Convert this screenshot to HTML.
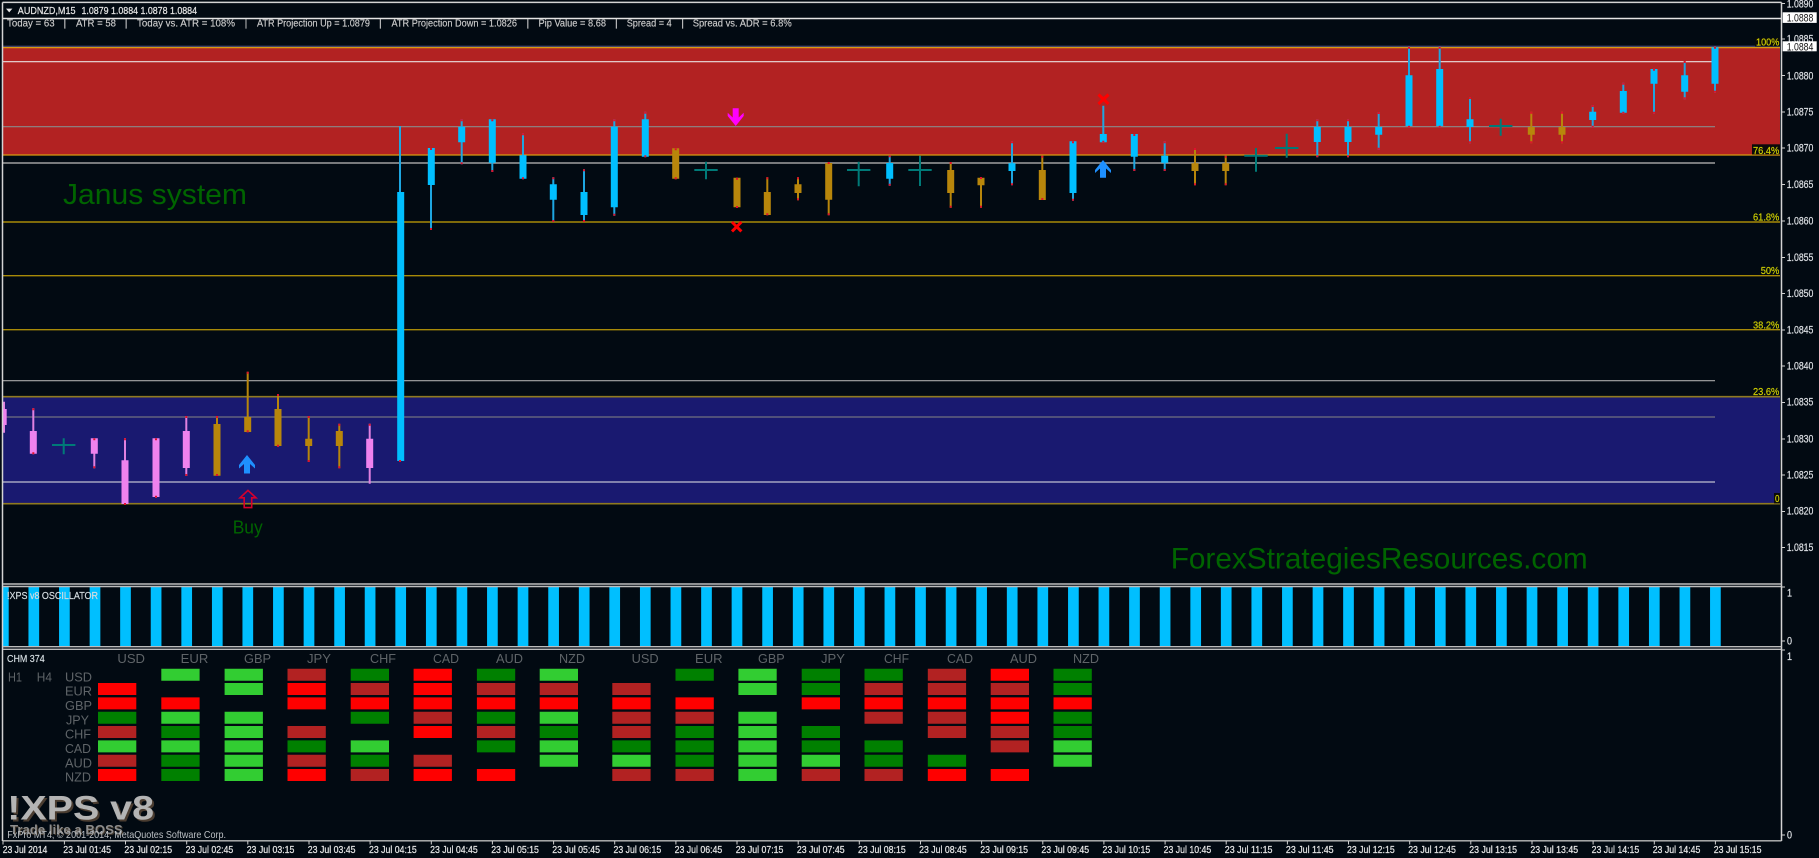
<!DOCTYPE html>
<html lang="en">
<head>
<meta charset="utf-8">
<title>AUDNZD,M15</title>
<style>
html,body{margin:0;padding:0;background:#020a12;width:1819px;height:858px;overflow:hidden}
svg{display:block;position:absolute;left:0;top:0}
text{font-family:"Liberation Sans",sans-serif}
.t{fill:#e4e4e4;stroke:#e4e4e4;stroke-width:.25px;font-size:10.5px}
.i{fill:#cccccc;stroke:#cccccc;stroke-width:.15px;font-size:10.5px}
.p{fill:#dde0e4;stroke:#dde0e4;stroke-width:.2px;font-size:11px}
.f{fill:#d0d000;stroke:#d0d000;stroke-width:.2px;font-size:10.5px}
.c{fill:#5f6468;font-size:13px}
.n{fill:none}
</style>
</head>
<body>
<svg width="1819" height="858" viewBox="0 0 1819 858" xmlns="http://www.w3.org/2000/svg">
<rect width="1819" height="858" fill="#020a12"/>

<!-- zones -->
<rect x="3" y="47.3" width="1777" height="107.7" fill="#b22222"/>
<rect x="3" y="396.7" width="1777" height="107" fill="#191970"/>

<!-- pivot lines -->
<path class="n" stroke="#e8e0e0" stroke-width="1.2" d="M3 61.7H1715"/>
<path class="n" stroke="#8a8a8a" stroke-width="1.2" d="M3 126.7H1715"/>
<path class="n" stroke="#a0a0a0" stroke-width="1.6" d="M3 163H1715"/>
<path class="n" stroke="#a8a8a8" stroke-width="1.2" d="M3 380.7H1715"/>
<path class="n" stroke="#62627e" stroke-width="1.6" d="M3 417H1715"/>
<path class="n" stroke="#a4a4c0" stroke-width="1.6" d="M3 482H1715"/>

<!-- fib lines -->
<path class="n" stroke="#5a5a88" stroke-width="1" d="M3 46.2H1780"/>
<path class="n" stroke="#d99a10" stroke-width="1.3" d="M3 47.6H1780M3 155H1780"/>
<path class="n" stroke="#a88a08" stroke-width="1.4" d="M3 222H1780M3 275.7H1780M3 329.7H1780"/>
<path class="n" stroke="#8f7a20" stroke-width="1.6" d="M3 396.7H1780M3 503.7H1780"/>

<!-- fib label backing -->
<rect x="1755" y="38" width="25" height="8.3" fill="#0a0a0a"/>
<rect x="1752" y="144.3" width="28" height="10.2" fill="#0a0a0a"/>
<rect x="1774" y="493" width="6" height="10.3" fill="#0a0a0a"/>
<text class="f" x="1756" y="45.5" textLength="23.3" lengthAdjust="spacingAndGlyphs">100%</text>
<text class="f" x="1753" y="154" textLength="26.3" lengthAdjust="spacingAndGlyphs">76.4%</text>
<text class="f" x="1753" y="220.5" textLength="26.3" lengthAdjust="spacingAndGlyphs">61.8%</text>
<text class="f" x="1760.7" y="274" textLength="18.6" lengthAdjust="spacingAndGlyphs">50%</text>
<text class="f" x="1753" y="328.5" textLength="26.3" lengthAdjust="spacingAndGlyphs">38.2%</text>
<text class="f" x="1753" y="395" textLength="26.3" lengthAdjust="spacingAndGlyphs">23.6%</text>
<text class="f" x="1775" y="502" textLength="4.5" lengthAdjust="spacingAndGlyphs">0</text>

<!-- blue candles: wicks -->
<path class="n" stroke="#1ea6e0" stroke-width="2" d="M400 126V462M431 148V230M461.7 119.3V164.3M492.3 119.3V172M523 133.3V179.3M553.3 177.3V222M584 169.3V222M614.3 119.3V215.7M645.3 111.7V157.3M889.7 155.3V185.7M1012 141.3V185.3M1073 141.3V200.7M1103.3 105.7V142.7M1134.3 134V171M1164.7 141.3V171M1317.3 119.3V157.3M1348 119.3V157.3M1378.7 112V149.7M1409 46.7V127.7M1439.7 46.7V127.7M1470 97V143.3M1592.7 105V127.7M1623.3 82.7V113.7M1654 68.7V113.7M1684.7 61V99.3M1715 46.7V92.7"/>
<!-- blue candles: bodies -->
<path class="n" stroke="#00bfff" stroke-width="7" d="M400.7 192V461M431.3 148V185M461.7 126.7V142.3M492.3 119.3V162.7M523 155.3V178.7M553.3 184.3V199.7M584 192V215M614.3 126.7V207.3M645.3 119.3V156.7M889.7 163V178.7M1012 163.3V171M1073 141.3V193M1103.3 134V142.3M1134.3 134V156.7M1164.7 155.7V162.7M1317.3 127V142M1348 127V142M1378.7 127V134.7M1409 75.3V126M1439.7 69V126M1470 119.3V127M1592.7 111.7V120M1623.3 91V112.7M1654 69V83.7M1684.7 75.3V91.7M1715 47.3V83.7"/>

<!-- gold candles -->
<path class="n" stroke="#b8860b" stroke-width="2" d="M217 416V476M247.7 371.7V432.3M278 394V446.7M308.7 416V462M339.3 423.7V468.3M675.7 148.3V179.3M737 177.7V208M767.3 177.3V215.3M798 177.3V200.3M828.7 162V215.3M950.7 162V207.7M981 177V207.7M1042.3 155.7V200M1195 148V185.3M1225.7 155.7V185.3M1531.3 111.7V143.3M1562 111.7V143.3"/>
<path class="n" stroke="#b8860b" stroke-width="7" d="M217 424V475.7M247.7 417V432M278 409V446M308.7 438.7V446M339.3 431V446M675.7 148.3V178.7M737 177.7V207.3M767.3 192V215M798 184.3V193M828.7 163V199.7M950.7 170V193M981 177.7V185.3M1042.3 170V200M1195 163.3V171M1225.7 163.3V171M1531.3 127V134.7M1562 127V134.7"/>

<!-- pink candles -->
<path class="n" stroke="#e080e0" stroke-width="2" d="M4 401.7V432.7M33.3 408.3V454.3M94.3 438.3V468.3M125 438.3V505M156 438.3V497.7M186.3 416V476M369.7 423.7V483.7"/>
<rect x="3" y="409" width="3.7" height="16" fill="#ee82ee"/>
<path class="n" stroke="#ee82ee" stroke-width="7" d="M33.3 431V453.7M94.3 438.3V453.7M125 460.3V504M156 438.3V497M186.3 431V468M369.7 438.7V468"/>

<!-- doji crosses -->
<path class="n" stroke="#007a78" stroke-width="2" d="M52 445H75.4M63.7 438.3V454.3M694.3 170H717.7M706 161.7V179.3M847 170H870.4M858.7 161.7V186.3M908.3 170H931.7M920 155.7V186M1244.3 155.7H1267.7M1256 148V171.7M1275 148H1298.4M1286.7 133.7V157.7M1489 126H1512.4M1500.7 118.7V135.7"/>

<!-- red wick tips -->
<path class="n" stroke="#e0102c" stroke-width="2" d="M33.3 408.3v2M33.3 452.3v2M94.3 438.3v2M94.3 466.3v2M125 438.3v2M125 503v2M156 438.3v2M156 495.7v2M186.3 416v2M186.3 474v2M217 416v2M217 474v2M247.7 371.7v2M247.7 430.3v2M278 394v2M278 444.7v2M308.7 416v2M308.7 460v2M339.3 423.7v2M339.3 466.3v2M369.7 423.7v2M400 460v2M431 148v2M431 228v2M461.7 119.3v2M461.7 162.3v2M492.3 119.3v2M492.3 170v2M523 133.3v2M523 177.3v2M553.3 177.3v2M553.3 220v2M584 169.3v2M584 220v2M614.3 119.3v2M614.3 213.7v2M645.3 111.7v2M645.3 155.3v2M675.7 148.3v2M675.7 177.3v2M737 177.7v2M737 206v2M767.3 177.3v2M767.3 213.3v2M798 177.3v2M798 198.3v2M828.7 162v2M828.7 213.3v2M889.7 155.3v2M889.7 183.7v2M950.7 162v2M950.7 205.7v2M981 177v2M981 205.7v2M1012 141.3v2M1012 183.3v2M1042.3 155.7v2M1042.3 198v2M1073 141.3v2M1073 198.7v2M1103.3 140.7v2M1134.3 134v2M1134.3 169v2M1164.7 141.3v2M1164.7 169v2M1195 148v2M1195 183.3v2M1225.7 155.7v2M1225.7 183.3v2M1317.3 119.3v2M1317.3 155.3v2M1348 119.3v2M1348 155.3v2M1378.7 112v2M1378.7 147.7v2M1409 46.7v2M1409 125.7v2M1439.7 46.7v2M1439.7 125.7v2M1470 97v2M1470 141.3v2M1531.3 111.7v2M1531.3 141.3v2M1562 111.7v2M1562 141.3v2M1592.7 105v2M1592.7 125.7v2M1623.3 82.7v2M1623.3 111.7v2M1654 68.7v2M1654 111.7v2M1684.7 61v2M1684.7 97.3v2M1715 46.7v2M1715 90.7v2"/>

<!-- signal arrows -->
<path fill="#1e90ff" d="M247 455L255 465V468.5L250 464V473.5H244V464L239 468.5V465Z"/>
<path fill="#1e90ff" d="M1103 160L1111 170V173L1106 168.5V177.7H1100V168.5L1095 173V170Z"/>
<path fill="#ff00ff" d="M735.7 126L727.7 116V112.8L732.7 117.5V108.3H738.7V117.5L743.7 112.8V116Z"/>
<path fill="none" stroke="#d8002c" stroke-width="1.6" d="M248 490.4L256 497.8H251.7V507.6H244.2V497.8H240Z"/>
<path class="n" stroke="#ff0000" stroke-width="3" d="M732 222L741.4 231.4M741.4 222L732 231.4"/>
<path class="n" stroke="#ff0000" stroke-width="3" d="M1098.5 94.5L1108.5 104M1108.5 94.5L1098.5 104"/>

<!-- watermark text -->
<text x="63" y="204" font-size="29" fill="#006400" textLength="184" lengthAdjust="spacingAndGlyphs">Janus system</text>
<text x="232.7" y="533.3" font-size="18" fill="#006400" textLength="30" lengthAdjust="spacingAndGlyphs">Buy</text>
<text x="1170.7" y="568.3" font-size="30" fill="#006400" textLength="417" lengthAdjust="spacingAndGlyphs">ForexStrategiesResources.com</text>

<!-- oscillator -->
<rect x="3" y="586.7" width="5.7" height="59.3" fill="#00bfff"/>
<path class="n" stroke="#00bfff" stroke-width="10.7" d="M33.8 586.7V646M64.4 586.7V646M95 586.7V646M125.5 586.7V646M156.1 586.7V646M186.7 586.7V646M217.3 586.7V646M247.8 586.7V646M278.4 586.7V646M309 586.7V646M339.6 586.7V646M370.1 586.7V646M400.7 586.7V646M431.3 586.7V646M461.9 586.7V646M492.4 586.7V646M523 586.7V646M553.6 586.7V646M584.2 586.7V646M614.7 586.7V646M645.3 586.7V646M675.9 586.7V646M706.5 586.7V646M737 586.7V646M767.6 586.7V646M798.2 586.7V646M828.8 586.7V646M859.3 586.7V646M889.9 586.7V646M920.5 586.7V646M951.1 586.7V646M981.6 586.7V646M1012.2 586.7V646M1042.8 586.7V646M1073.4 586.7V646M1103.9 586.7V646M1134.5 586.7V646M1165.1 586.7V646M1195.7 586.7V646M1226.2 586.7V646M1256.8 586.7V646M1287.4 586.7V646M1318 586.7V646M1348.5 586.7V646M1379.1 586.7V646M1409.7 586.7V646M1440.3 586.7V646M1470.8 586.7V646M1501.4 586.7V646M1532 586.7V646M1562.6 586.7V646M1593.1 586.7V646M1623.7 586.7V646M1654.3 586.7V646M1684.9 586.7V646M1715.4 586.7V646"/>
<text x="7" y="599" font-size="10.5" fill="#d4dce0" stroke="#d4dce0" stroke-width=".2" textLength="91" lengthAdjust="spacingAndGlyphs">!XPS v8 OSCILLATOR</text>

<!-- CHM matrix -->
<path class="n" stroke="#ff0000" stroke-width="12" d="M413.6 674.7h38.3M990.7 674.7h38.3M98 689h38.3M287.5 689h38.3M413.6 689h38.3M98 703.4h38.3M161.3 703.4h38.3M287.5 703.4h38.3M350.7 703.4h38.3M413.6 703.4h38.3M476.9 703.4h38.3M539.7 703.4h38.3M612.3 703.4h38.3M675.5 703.4h38.3M801.7 703.4h38.3M864.5 703.4h38.3M927.8 703.4h38.3M990.7 703.4h38.3M1053.5 703.4h38.3M990.7 717.7h38.3M413.6 732h38.3M98 775h38.3M287.5 775h38.3M413.6 775h38.3M476.9 775h38.3M927.8 775h38.3M990.7 775h38.3"/>
<path class="n" stroke="#b22222" stroke-width="12" d="M287.5 674.7h38.3M927.8 674.7h38.3M350.7 689h38.3M476.9 689h38.3M539.7 689h38.3M612.3 689h38.3M864.5 689h38.3M927.8 689h38.3M990.7 689h38.3M413.6 717.7h38.3M612.3 717.7h38.3M675.5 717.7h38.3M864.5 717.7h38.3M927.8 717.7h38.3M98 732h38.3M287.5 732h38.3M476.9 732h38.3M612.3 732h38.3M927.8 732h38.3M990.7 732h38.3M990.7 746.4h38.3M98 760.7h38.3M287.5 760.7h38.3M413.6 760.7h38.3M350.7 775h38.3M612.3 775h38.3M675.5 775h38.3M801.7 775h38.3M864.5 775h38.3"/>
<path class="n" stroke="#32cd32" stroke-width="12" d="M161.3 674.7h38.3M224.6 674.7h38.3M539.7 674.7h38.3M738.4 674.7h38.3M224.6 689h38.3M738.4 689h38.3M161.3 717.7h38.3M224.6 717.7h38.3M539.7 717.7h38.3M738.4 717.7h38.3M224.6 732h38.3M738.4 732h38.3M98 746.4h38.3M161.3 746.4h38.3M224.6 746.4h38.3M350.7 746.4h38.3M539.7 746.4h38.3M738.4 746.4h38.3M1053.5 746.4h38.3M224.6 760.7h38.3M539.7 760.7h38.3M612.3 760.7h38.3M738.4 760.7h38.3M801.7 760.7h38.3M1053.5 760.7h38.3M224.6 775h38.3M738.4 775h38.3"/>
<path class="n" stroke="#008000" stroke-width="12" d="M350.7 674.7h38.3M476.9 674.7h38.3M675.5 674.7h38.3M801.7 674.7h38.3M864.5 674.7h38.3M1053.5 674.7h38.3M801.7 689h38.3M1053.5 689h38.3M98 717.7h38.3M350.7 717.7h38.3M476.9 717.7h38.3M1053.5 717.7h38.3M161.3 732h38.3M539.7 732h38.3M675.5 732h38.3M801.7 732h38.3M1053.5 732h38.3M287.5 746.4h38.3M476.9 746.4h38.3M612.3 746.4h38.3M675.5 746.4h38.3M801.7 746.4h38.3M864.5 746.4h38.3M161.3 760.7h38.3M350.7 760.7h38.3M675.5 760.7h38.3M864.5 760.7h38.3M927.8 760.7h38.3M161.3 775h38.3"/>

<text x="7" y="662" font-size="10.5" fill="#d4dce0" stroke="#d4dce0" stroke-width=".2" textLength="37.7" lengthAdjust="spacingAndGlyphs">CHM 374</text>

<text class="c" x="117.4" y="663" textLength="27.6" lengthAdjust="spacingAndGlyphs">USD</text>
<text class="c" x="180.7" y="663" textLength="27.7" lengthAdjust="spacingAndGlyphs">EUR</text>
<text class="c" x="244" y="663" textLength="27" lengthAdjust="spacingAndGlyphs">GBP</text>
<text class="c" x="307" y="663" textLength="24" lengthAdjust="spacingAndGlyphs">JPY</text>
<text class="c" x="370" y="663" textLength="26" lengthAdjust="spacingAndGlyphs">CHF</text>
<text class="c" x="433" y="663" textLength="26" lengthAdjust="spacingAndGlyphs">CAD</text>
<text class="c" x="496" y="663" textLength="27" lengthAdjust="spacingAndGlyphs">AUD</text>
<text class="c" x="559" y="663" textLength="26" lengthAdjust="spacingAndGlyphs">NZD</text>

<text class="c" x="631.6" y="663" textLength="27" lengthAdjust="spacingAndGlyphs">USD</text>
<text class="c" x="695" y="663" textLength="27.6" lengthAdjust="spacingAndGlyphs">EUR</text>
<text class="c" x="758" y="663" textLength="26.7" lengthAdjust="spacingAndGlyphs">GBP</text>
<text class="c" x="821" y="663" textLength="24" lengthAdjust="spacingAndGlyphs">JPY</text>
<text class="c" x="884" y="663" textLength="25" lengthAdjust="spacingAndGlyphs">CHF</text>
<text class="c" x="947" y="663" textLength="26" lengthAdjust="spacingAndGlyphs">CAD</text>
<text class="c" x="1010" y="663" textLength="27" lengthAdjust="spacingAndGlyphs">AUD</text>
<text class="c" x="1073" y="663" textLength="26" lengthAdjust="spacingAndGlyphs">NZD</text>

<text class="c" x="8" y="681.5" textLength="14" lengthAdjust="spacingAndGlyphs">H1</text>
<text class="c" x="36.8" y="681.5" textLength="15.2" lengthAdjust="spacingAndGlyphs">H4</text>
<text class="c" x="65" y="681.5" textLength="27" lengthAdjust="spacingAndGlyphs">USD</text>
<text class="c" x="65" y="695.7" textLength="27" lengthAdjust="spacingAndGlyphs">EUR</text>
<text class="c" x="65" y="710" textLength="27" lengthAdjust="spacingAndGlyphs">GBP</text>
<text class="c" x="66" y="724.3" textLength="23" lengthAdjust="spacingAndGlyphs">JPY</text>
<text class="c" x="65" y="738.7" textLength="26" lengthAdjust="spacingAndGlyphs">CHF</text>
<text class="c" x="65" y="753" textLength="26" lengthAdjust="spacingAndGlyphs">CAD</text>
<text class="c" x="65" y="767.3" textLength="27" lengthAdjust="spacingAndGlyphs">AUD</text>
<text class="c" x="65" y="781.7" textLength="26" lengthAdjust="spacingAndGlyphs">NZD</text>

<!-- logo -->
<text x="9.3" y="821.3" font-size="34" font-weight="bold" fill="#4a3c30" textLength="146.7" lengthAdjust="spacingAndGlyphs">!XPS v8</text>
<text x="7.3" y="819.5" font-size="34" font-weight="bold" fill="#b4b4b4" textLength="146.7" lengthAdjust="spacingAndGlyphs">!XPS v8</text>
<text x="11" y="835" font-size="13" font-weight="bold" fill="#3e3428" textLength="112.7" lengthAdjust="spacingAndGlyphs">Trade like a BOSS</text>
<text x="10" y="834" font-size="13" font-weight="bold" fill="#8c8c8c" textLength="112.7" lengthAdjust="spacingAndGlyphs">Trade like a BOSS</text>
<text x="7.3" y="838" font-size="10.5" fill="#bcc0c4" textLength="218.7" lengthAdjust="spacingAndGlyphs">FxPro MT4, © 2001-2014, MetaQuotes Software Corp.</text>

<!-- frame -->
<path class="n" stroke="#d4d4d4" stroke-width="1.5" d="M2.5 2.4H1781.5M2.5 2.4V841M1781.5 2.4V841"/>
<path class="n" stroke="#e4e4e4" stroke-width="1.4" d="M3 18.5H1781"/>
<path class="n" stroke="#bcbcbc" stroke-width="1.4" d="M3 584H1781.5M3 586.5H1781.5M3 646.7H1781.5M3 649.3H1781.5M3 840.8H1781.5"/>

<!-- header -->
<path fill="#e8e8e8" d="M6 8.6h6.4L9.2 12.4Z"/>
<text class="t" x="17.8" y="14" textLength="57.7" lengthAdjust="spacingAndGlyphs">AUDNZD,M15</text>
<text class="t" x="81.5" y="14" textLength="115.5" lengthAdjust="spacingAndGlyphs">1.0879 1.0884 1.0878 1.0884</text>

<text class="i" x="7" y="26.5" textLength="47.6" lengthAdjust="spacingAndGlyphs">Today = 63</text>
<text class="i" x="63.5" y="26.5">|</text>
<text class="i" x="76" y="26.5" textLength="40" lengthAdjust="spacingAndGlyphs">ATR = 58</text>
<text class="i" x="124.7" y="26.5">|</text>
<text class="i" x="137" y="26.5" textLength="98" lengthAdjust="spacingAndGlyphs">Today vs. ATR = 108%</text>
<text class="i" x="244.6" y="26.5">|</text>
<text class="i" x="257" y="26.5" textLength="113" lengthAdjust="spacingAndGlyphs">ATR Projection Up = 1.0879</text>
<text class="i" x="379" y="26.5">|</text>
<text class="i" x="391.5" y="26.5" textLength="125.5" lengthAdjust="spacingAndGlyphs">ATR Projection Down = 1.0826</text>
<text class="i" x="526.5" y="26.5">|</text>
<text class="i" x="538.5" y="26.5" textLength="67.5" lengthAdjust="spacingAndGlyphs">Pip Value = 8.68</text>
<text class="i" x="615" y="26.5">|</text>
<text class="i" x="626.7" y="26.5" textLength="45" lengthAdjust="spacingAndGlyphs">Spread = 4</text>
<text class="i" x="681.3" y="26.5">|</text>
<text class="i" x="692.7" y="26.5" textLength="99" lengthAdjust="spacingAndGlyphs">Spread vs. ADR = 6.8%</text>

<!-- price scale ticks -->
<path class="n" stroke="#d0d0d0" stroke-width="1" d="M1782 3.5h3M1782 39h3M1782 75.5h3M1782 112h3M1782 148h3M1782 184.5h3M1782 221h3M1782 257.5h3M1782 293.5h3M1782 330h3M1782 366h3M1782 402.5h3M1782 439h3M1782 475h3M1782 511.5h3M1782 547.5h3M1782 587h3M1782 641h3M1782 650h3M1782 835h3"/>
<text class="p" x="1786.7" y="7.3" textLength="26.7" lengthAdjust="spacingAndGlyphs">1.0890</text>
<text class="p" x="1786.7" y="42.3" textLength="26.7" lengthAdjust="spacingAndGlyphs">1.0885</text>
<text class="p" x="1786.7" y="79.3" textLength="26.7" lengthAdjust="spacingAndGlyphs">1.0880</text>
<text class="p" x="1786.7" y="115.7" textLength="26.7" lengthAdjust="spacingAndGlyphs">1.0875</text>
<text class="p" x="1786.7" y="151.7" textLength="26.7" lengthAdjust="spacingAndGlyphs">1.0870</text>
<text class="p" x="1786.7" y="188" textLength="26.7" lengthAdjust="spacingAndGlyphs">1.0865</text>
<text class="p" x="1786.7" y="224.3" textLength="26.7" lengthAdjust="spacingAndGlyphs">1.0860</text>
<text class="p" x="1786.7" y="261" textLength="26.7" lengthAdjust="spacingAndGlyphs">1.0855</text>
<text class="p" x="1786.7" y="297" textLength="26.7" lengthAdjust="spacingAndGlyphs">1.0850</text>
<text class="p" x="1786.7" y="333.3" textLength="26.7" lengthAdjust="spacingAndGlyphs">1.0845</text>
<text class="p" x="1786.7" y="369.7" textLength="26.7" lengthAdjust="spacingAndGlyphs">1.0840</text>
<text class="p" x="1786.7" y="405.7" textLength="26.7" lengthAdjust="spacingAndGlyphs">1.0835</text>
<text class="p" x="1786.7" y="442.3" textLength="26.7" lengthAdjust="spacingAndGlyphs">1.0830</text>
<text class="p" x="1786.7" y="478.7" textLength="26.7" lengthAdjust="spacingAndGlyphs">1.0825</text>
<text class="p" x="1786.7" y="514.7" textLength="26.7" lengthAdjust="spacingAndGlyphs">1.0820</text>
<text class="p" x="1786.7" y="551" textLength="26.7" lengthAdjust="spacingAndGlyphs">1.0815</text>

<rect x="1782.7" y="12.3" width="34" height="10.6" fill="#ffffff"/>
<text x="1786.7" y="21.5" font-size="11" fill="#101010" textLength="26.7" lengthAdjust="spacingAndGlyphs">1.0888</text>
<rect x="1782.7" y="41.3" width="34" height="10" fill="#ffffff"/>
<text x="1786.7" y="50.3" font-size="11" fill="#101010" textLength="26.7" lengthAdjust="spacingAndGlyphs">1.0884</text>

<text class="p" x="1787" y="596.7" textLength="5" lengthAdjust="spacingAndGlyphs">1</text>
<text class="p" x="1787" y="644.7" textLength="5" lengthAdjust="spacingAndGlyphs">0</text>
<text class="p" x="1787" y="660" textLength="5" lengthAdjust="spacingAndGlyphs">1</text>
<text class="p" x="1787" y="838.7" textLength="5" lengthAdjust="spacingAndGlyphs">0</text>

<!-- time axis -->
<path class="n" stroke="#d0d0d0" stroke-width="1" d="M3 841v3.5M64.4 841v3.5M125.5 841v3.5M186.7 841v3.5M247.8 841v3.5M309 841v3.5M370.1 841v3.5M431.3 841v3.5M492.4 841v3.5M553.6 841v3.5M614.7 841v3.5M675.9 841v3.5M737 841v3.5M798.2 841v3.5M859.3 841v3.5M920.5 841v3.5M981.6 841v3.5M1042.8 841v3.5M1103.9 841v3.5M1165.1 841v3.5M1226.2 841v3.5M1287.4 841v3.5M1348.5 841v3.5M1409.7 841v3.5M1470.8 841v3.5M1532 841v3.5M1593.1 841v3.5M1654.3 841v3.5M1715.4 841v3.5"/>
<text class="t" x="2.7" y="853" textLength="44.6" lengthAdjust="spacingAndGlyphs">23 Jul 2014</text>
<text class="t" x="63.3" y="853" textLength="47.7" lengthAdjust="spacingAndGlyphs">23 Jul 01:45</text>
<text class="t" x="124.4" y="853" textLength="47.7" lengthAdjust="spacingAndGlyphs">23 Jul 02:15</text>
<text class="t" x="185.6" y="853" textLength="47.7" lengthAdjust="spacingAndGlyphs">23 Jul 02:45</text>
<text class="t" x="246.7" y="853" textLength="47.7" lengthAdjust="spacingAndGlyphs">23 Jul 03:15</text>
<text class="t" x="307.8" y="853" textLength="47.7" lengthAdjust="spacingAndGlyphs">23 Jul 03:45</text>
<text class="t" x="369" y="853" textLength="47.7" lengthAdjust="spacingAndGlyphs">23 Jul 04:15</text>
<text class="t" x="430.1" y="853" textLength="47.7" lengthAdjust="spacingAndGlyphs">23 Jul 04:45</text>
<text class="t" x="491.2" y="853" textLength="47.7" lengthAdjust="spacingAndGlyphs">23 Jul 05:15</text>
<text class="t" x="552.3" y="853" textLength="47.7" lengthAdjust="spacingAndGlyphs">23 Jul 05:45</text>
<text class="t" x="613.5" y="853" textLength="47.7" lengthAdjust="spacingAndGlyphs">23 Jul 06:15</text>
<text class="t" x="674.6" y="853" textLength="47.7" lengthAdjust="spacingAndGlyphs">23 Jul 06:45</text>
<text class="t" x="735.7" y="853" textLength="47.7" lengthAdjust="spacingAndGlyphs">23 Jul 07:15</text>
<text class="t" x="796.9" y="853" textLength="47.7" lengthAdjust="spacingAndGlyphs">23 Jul 07:45</text>
<text class="t" x="858" y="853" textLength="47.7" lengthAdjust="spacingAndGlyphs">23 Jul 08:15</text>
<text class="t" x="919.1" y="853" textLength="47.7" lengthAdjust="spacingAndGlyphs">23 Jul 08:45</text>
<text class="t" x="980.3" y="853" textLength="47.7" lengthAdjust="spacingAndGlyphs">23 Jul 09:15</text>
<text class="t" x="1041.4" y="853" textLength="47.7" lengthAdjust="spacingAndGlyphs">23 Jul 09:45</text>
<text class="t" x="1102.5" y="853" textLength="47.7" lengthAdjust="spacingAndGlyphs">23 Jul 10:15</text>
<text class="t" x="1163.6" y="853" textLength="47.7" lengthAdjust="spacingAndGlyphs">23 Jul 10:45</text>
<text class="t" x="1224.8" y="853" textLength="47.7" lengthAdjust="spacingAndGlyphs">23 Jul 11:15</text>
<text class="t" x="1285.9" y="853" textLength="47.7" lengthAdjust="spacingAndGlyphs">23 Jul 11:45</text>
<text class="t" x="1347" y="853" textLength="47.7" lengthAdjust="spacingAndGlyphs">23 Jul 12:15</text>
<text class="t" x="1408.2" y="853" textLength="47.7" lengthAdjust="spacingAndGlyphs">23 Jul 12:45</text>
<text class="t" x="1469.3" y="853" textLength="47.7" lengthAdjust="spacingAndGlyphs">23 Jul 13:15</text>
<text class="t" x="1530.4" y="853" textLength="47.7" lengthAdjust="spacingAndGlyphs">23 Jul 13:45</text>
<text class="t" x="1591.6" y="853" textLength="47.7" lengthAdjust="spacingAndGlyphs">23 Jul 14:15</text>
<text class="t" x="1652.7" y="853" textLength="47.7" lengthAdjust="spacingAndGlyphs">23 Jul 14:45</text>
<text class="t" x="1713.8" y="853" textLength="47.7" lengthAdjust="spacingAndGlyphs">23 Jul 15:15</text>
</svg>
</body>
</html>
